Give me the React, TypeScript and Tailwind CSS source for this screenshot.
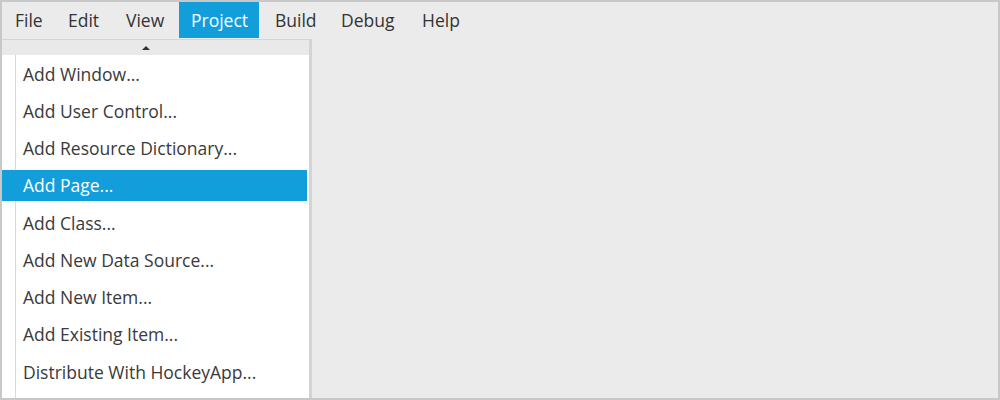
import React from "react"

const menus = [
  { label: "File", w: "w-[53px]", pl: "pl-[13px]" },
  { label: "Edit", w: "w-[58px]", pl: "pl-[13px]" },
  { label: "View", w: "w-[66px]", pl: "pl-[13px]" },
  { label: "Project", w: "w-[80px]", pl: "pl-[12px]", active: true },
  { label: "Build", w: "w-[69px]", pl: "pl-[16px]" },
  { label: "Debug", w: "w-[82px]", pl: "pl-[13px]" },
  { label: "Help", w: "w-[60px]", pl: "pl-[12px]" },
]

const items = [
  "Add Window...",
  "Add User Control...",
  "Add Resource Dictionary...",
  "Add Page...",
  "Add Class...",
  "Add New Data Source...",
  "Add New Item...",
  "Add Existing Item...",
  "Distribute With HockeyApp...",
]

export default function App() {
  return (
    <div
      className="w-[1000px] h-[400px] border-2 border-[#c8c8c8] bg-[#ebebeb] flex flex-col overflow-hidden"
      style={{ fontFamily: '"Open Sans", "Noto Sans", sans-serif' }}
    >
      {/* menu bar */}
      <div className="flex h-[36px] shrink-0">
        {menus.map((m) => (
          <div
            key={m.label}
            className={`${m.w} ${m.pl} flex items-center pt-px text-[17.5px] ${
              m.active ? "bg-[#119edb] text-white" : "text-[#333333]"
            }`}
          >
            {m.label}
          </div>
        ))}
      </div>

      {/* dropdown */}
      <div className="mt-px w-[310px] flex-1 flex flex-col border-t border-r-[3px] border-[#d4d4d4]">
        <div className="h-[15px] shrink-0 flex items-center justify-center bg-[#e9e9e9]">
          <svg width="8" height="4" viewBox="0 0 8 4" className="ml-[-20px]">
            <path d="M0 4 L4 0 L8 4 Z" fill="#333333" />
          </svg>
        </div>
        <div className="relative flex-1 bg-white">
          <div className="absolute left-[13px] top-0 bottom-0 w-px bg-[#d9d9d9]" />
          <div className="relative flex flex-col">
            {items.map((it) => {
              const active = it === "Add Page..."
              return (
                <div key={it} className="h-[37.25px] flex items-center">
                  <div
                    className={`h-[31px] w-full mr-[2px] flex items-center pl-[21px] text-[17.5px] ${
                      active ? "bg-[#119edb] text-white" : "text-[#3a3a3a]"
                    }`}
                  >
                    {it}
                  </div>
                </div>
              )
            })}
          </div>
        </div>
      </div>
    </div>
  )
}
